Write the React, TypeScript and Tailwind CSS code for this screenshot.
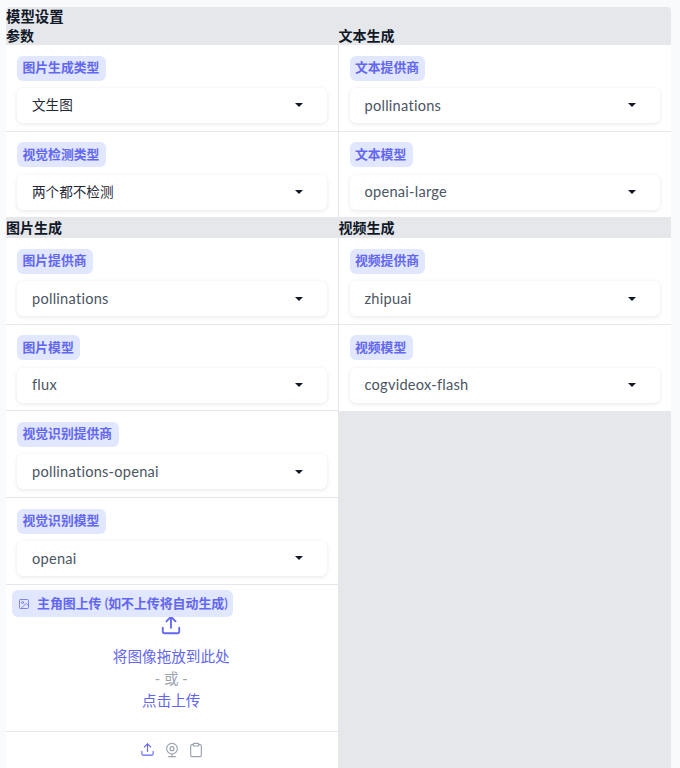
import React from "react";
import { Upload, Webcam, Clipboard, Image } from "lucide-react";

const font = "font-['Lato','Noto_Sans_CJK_SC',sans-serif]";

function Field({ label, value, latin, last }: { label: string; value: string; latin?: boolean; last?: boolean }) {
  return (
    <div className={`h-[86.6px] bg-white px-[11px] pt-[9px] ${last ? "" : "border-b border-[#e5e7eb]"}`}>
      <div className="inline-flex h-[25px] items-center rounded-[6px] bg-[#e0e7ff] pb-[1px] pl-[5.5px] pr-[6.5px] text-[12.8px] font-semibold text-[#6366f1]">
        {label}
      </div>
      <div className="mt-[7.4px] flex h-[35px] items-center justify-between rounded-[6px] bg-white pl-[15px] pr-[24px] text-[#374151] shadow-[0_1px_4px_rgba(0,0,0,0.1)]">
        <span className={latin ? "text-[14.6px] tracking-[0.25px] text-[#4b5563]" : "text-[13.6px] text-[#1f2937]"}>{value}</span>
        <svg width="8" height="4" viewBox="0 0 8 4" className="shrink-0">
          <path d="M0 0h8L4 4z" fill="#111827" />
        </svg>
      </div>
    </div>
  );
}

function Head({ children, short }: { children: React.ReactNode; short?: boolean }) {
  return (
    <div className={`text-[14px] font-bold leading-[18px] text-[#111827] ${short ? "h-[18px]" : "h-[20px] pt-[1px]"}`}>
      {children}
    </div>
  );
}

export default function App() {
  return (
    <div className={`h-[768px] overflow-hidden bg-[#f9fafc] pl-[6px] pr-[9px] pt-[7px] ${font}`}>
      <div className="h-full overflow-hidden rounded-t-[4px] bg-[#e5e7eb]">
        <div className="h-[20px] pt-[1px] text-[14.4px] font-bold leading-[18px] text-[#111827]">模型设置</div>
        <div className="grid grid-cols-2">
          <div>
            <Head short>参数</Head>
            <div className="border-r border-[#e5e7eb]">
              <Field label="图片生成类型" value="文生图" />
              <Field label="视觉检测类型" value="两个都不检测" />
            </div>
            <Head>图片生成</Head>
            <div className="border-r border-[#e5e7eb]">
              <Field label="图片提供商" value="pollinations" latin />
              <Field label="图片模型" value="flux" latin />
              <Field label="视觉识别提供商" value="pollinations-openai" latin />
              <Field label="视觉识别模型" value="openai" latin />
              <div className="relative h-[184px] bg-white">
                <div className="absolute left-[6px] top-[5.5px] flex h-[27px] items-center gap-[7px] rounded-[6px] bg-[#e0e7ff] pl-[6px] pr-[5px] text-[12.9px] font-semibold text-[#6366f1]">
                  <Image size={12} strokeWidth={1.5} />
                  <span>主角图上传 (如不上传将自动生成)</span>
                </div>
                <div className="flex h-[147px] flex-col items-center border-b border-[#e5e7eb] pr-[1px] pt-[29.4px]">
                  <Upload size={22} strokeWidth={2} className="text-[#6366f1]" />
                  <div className="mt-[10px] text-[14.6px] leading-[22px] text-[#6366f1]">将图像拖放到此处</div>
                  <div className="text-[14.6px] leading-[22px] text-[#9ca3af]">- 或 -</div>
                  <div className="text-[14.6px] leading-[22px] text-[#6366f1]">点击上传</div>
                </div>
                <div className="flex justify-center gap-[8.5px] pl-[1px] pt-[10px]">
                  <Upload size={15} strokeWidth={1.75} className="text-[#6366f1]" />
                  <Webcam size={16} strokeWidth={1.75} className="text-[#9ca3af]" />
                  <Clipboard size={16} strokeWidth={1.75} className="text-[#9ca3af]" />
                </div>
              </div>
            </div>
          </div>
          <div>
            <Head short>文本生成</Head>
            <Field label="文本提供商" value="pollinations" latin />
            <Field label="文本模型" value="openai-large" latin />
            <Head>视频生成</Head>
            <Field label="视频提供商" value="zhipuai" latin />
            <Field label="视频模型" value="cogvideox-flash" latin last />
          </div>
        </div>
      </div>
    </div>
  );
}
